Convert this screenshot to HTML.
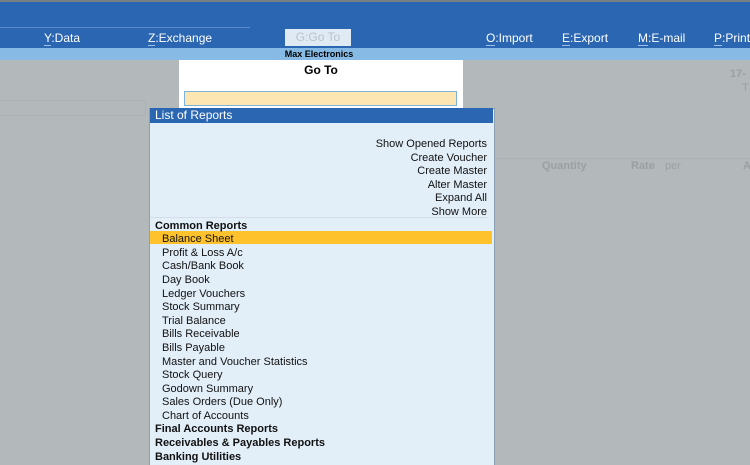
<!DOCTYPE html><html><head><style>
html,body{margin:0;width:750px;height:465px;overflow:hidden}
body{background:#b3b8ba;font-family:"Liberation Sans",Arial,sans-serif;position:relative}
.a{position:absolute}
.top{left:0;top:0;width:750px;height:2px;background:#7a7f85}
.bar{left:0;top:2px;width:750px;height:46px;background:#2a66b1}
.k{top:31px;font-size:12px;color:#fff}
.k u{text-decoration:none;border-bottom:1px solid #9cc0ea}
.strip{left:0;top:48px;width:750px;height:12px;background:#87bbe5}
.lst div{height:13.6px;line-height:13.6px;font-size:11px;color:#111;white-space:nowrap}
.b{font-weight:bold;padding-left:5px}
.i{padding-left:12px}
.r{text-align:right;padding-right:6px}
</style></head><body>
<div class="a top"></div><div class="a bar"></div>
<div class="a" style="left:0;top:27px;width:250px;height:1px;background:#5b8ccb"></div>
<div class="a k" style="left:44px"><u>Y</u>:Data</div>
<div class="a k" style="left:148px"><u>Z</u>:Exchange</div>
<div class="a" style="left:285px;top:29px;width:66px;height:17px;background:#dfeaf5;color:#b9c3cc;font-size:12px;line-height:17px;text-align:center">G:Go To</div>
<div class="a k" style="left:486px"><u>O</u>:Import</div>
<div class="a k" style="left:562px"><u>E</u>:Export</div>
<div class="a k" style="left:638px"><u>M</u>:E-mail</div>
<div class="a k" style="left:714px"><u>P</u>:Print</div>
<div class="a strip"></div>
<div class="a" style="left:0;top:49px;width:750px;text-align:center;font-size:9px;font-weight:bold;line-height:10px"><span style="position:relative;left:-56px">Max Electronics</span></div>
<div class="a" style="left:0;top:100px;width:145px;height:14px;border:1px solid #a9b3b8;border-left:none"></div>
<div class="a" style="left:493px;top:158px;width:257px;height:1px;background:#aab1b4"></div>
<div class="a" style="left:730px;top:68px;font-size:11px;color:#9aa0a3;font-weight:bold">17-</div>
<div class="a" style="left:742px;top:82px;font-size:11px;color:#9aa0a3">T</div>
<div class="a" style="left:542px;top:160px;font-size:11px;color:#9aa0a3;font-weight:bold">Quantity</div>
<div class="a" style="left:631px;top:160px;font-size:11px;color:#9aa0a3;font-weight:bold">Rate</div>
<div class="a" style="left:665px;top:160px;font-size:11px;color:#9aa0a3">per</div>
<div class="a" style="left:743px;top:160px;font-size:11px;color:#9aa0a3;font-weight:bold">A</div>
<div class="a" style="left:179px;top:60px;width:284px;height:60px;background:#fff"></div>
<div class="a" style="left:179px;top:63px;width:284px;text-align:center;font-size:12px;font-weight:bold">Go To</div>
<div class="a" style="left:184px;top:91px;width:271px;height:13px;background:#fde6b1;border:1px solid #7fb2d8"></div>
<div class="a" style="left:149px;top:108px;width:344px;height:360px;background:#e2eff9;border:1px solid #8aa0b5"></div>
<div class="a" style="left:150px;top:108px;width:343px;height:15px;background:#2a66b1;color:#fff;font-size:12px;line-height:15px;padding-left:5px;box-sizing:border-box">List of Reports</div>
<div class="a" style="left:150px;top:217px;width:337px;height:1px;background:#d3dee8"></div>
<div class="a" style="left:150px;top:231px;width:342px;height:13px;background:#fec22c"></div>
<div class="a lst" style="left:150px;top:138px;width:343px">
<div class="r">Show Opened Reports</div><div class="r">Create Voucher</div><div class="r">Create Master</div><div class="r">Alter Master</div><div class="r">Expand All</div><div class="r">Show More</div>
<div class="b">Common Reports</div>
<div class="i">Balance Sheet</div><div class="i">Profit &amp; Loss A/c</div><div class="i">Cash/Bank Book</div><div class="i">Day Book</div><div class="i">Ledger Vouchers</div><div class="i">Stock Summary</div><div class="i">Trial Balance</div><div class="i">Bills Receivable</div><div class="i">Bills Payable</div><div class="i">Master and Voucher Statistics</div><div class="i">Stock Query</div><div class="i">Godown Summary</div><div class="i">Sales Orders (Due Only)</div><div class="i">Chart of Accounts</div>
<div class="b">Final Accounts Reports</div><div class="b">Receivables &amp; Payables Reports</div><div class="b">Banking Utilities</div><div class="b">Ledger Reports</div>
</div>
</body></html>
